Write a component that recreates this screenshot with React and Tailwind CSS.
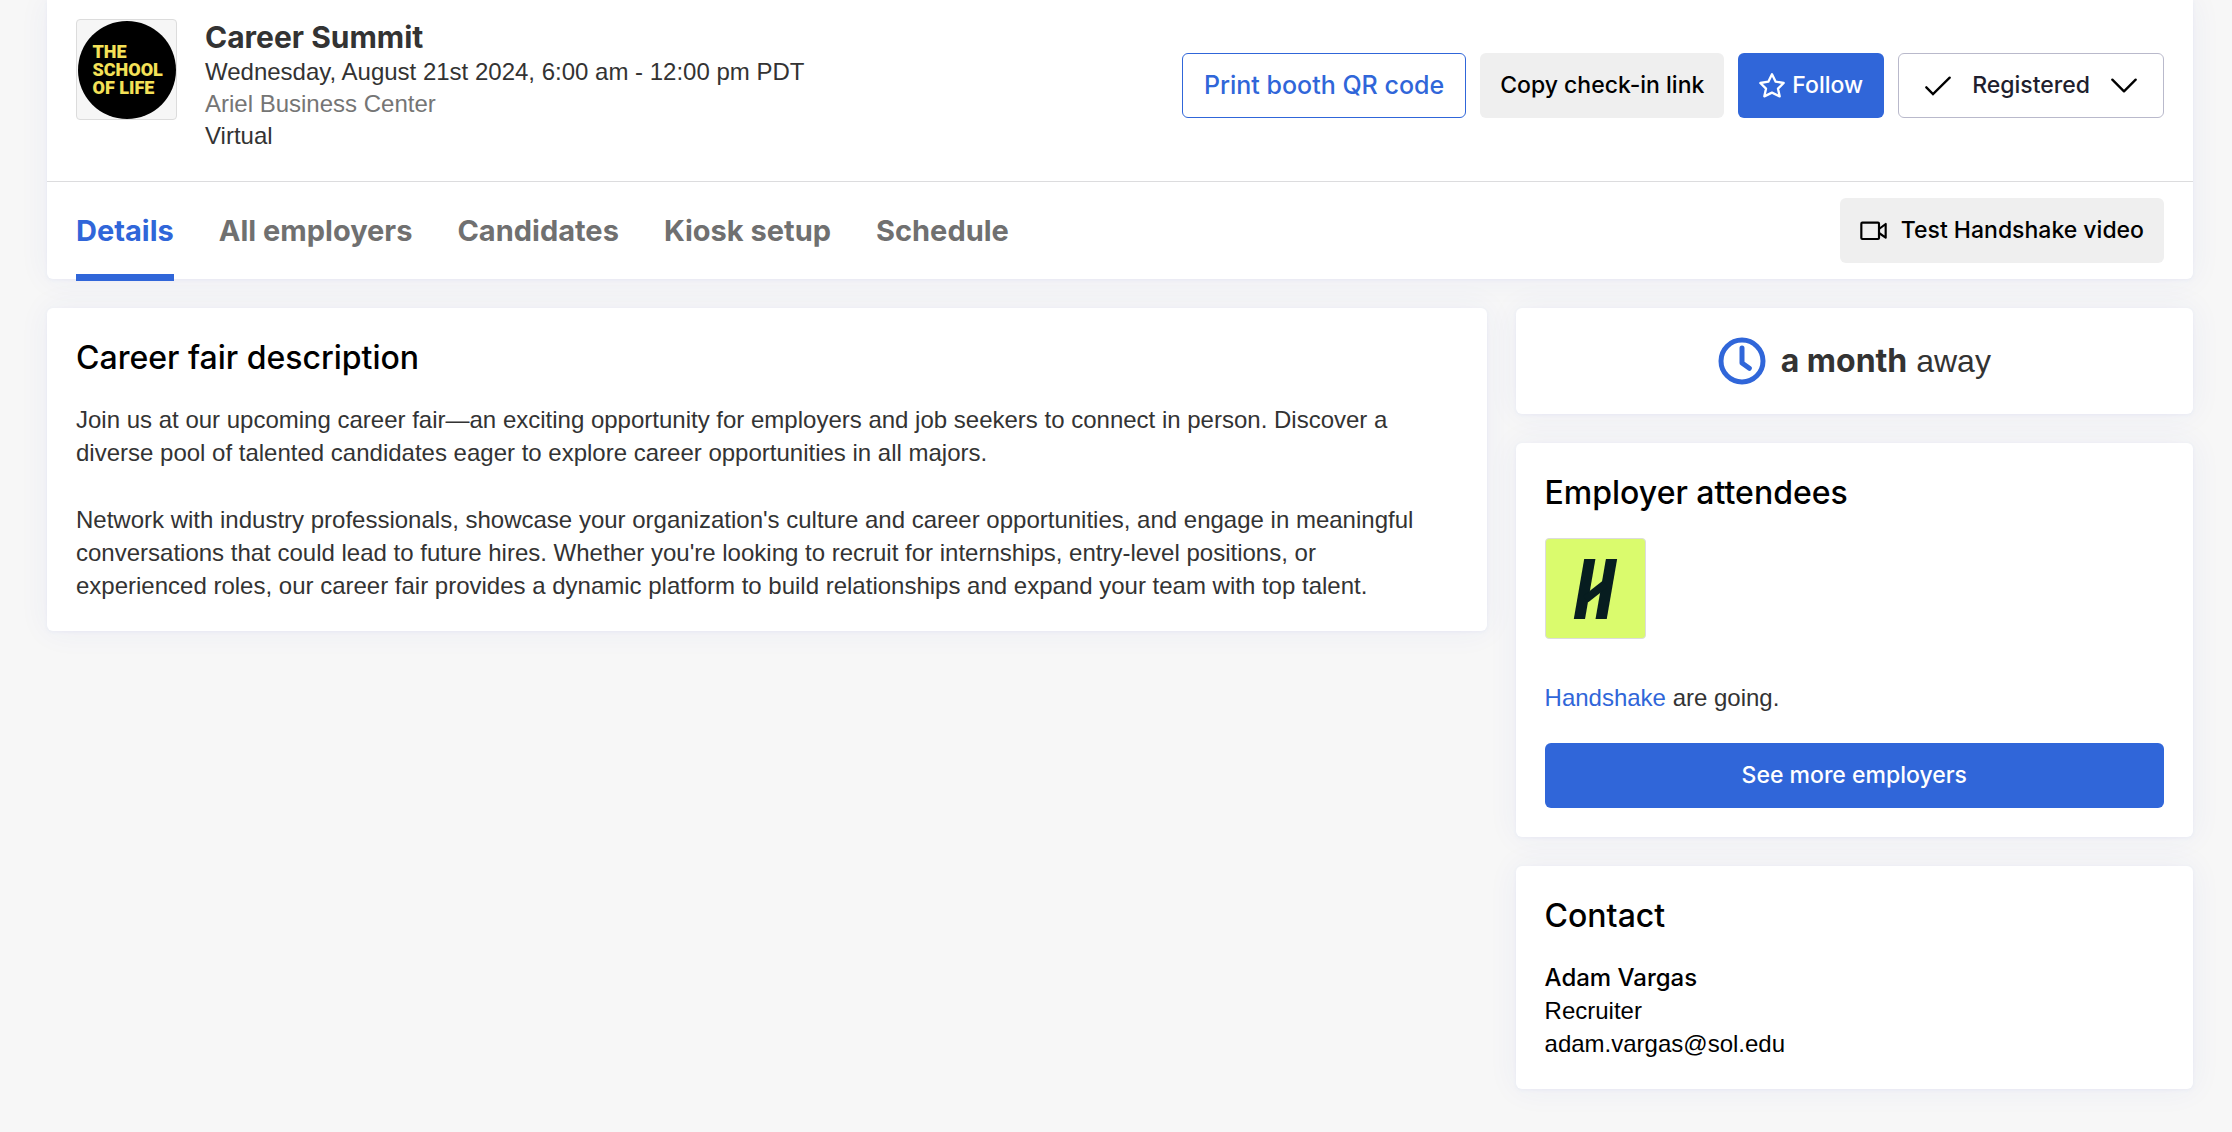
import { useState } from "react";
import { clsx } from "clsx";

const tabs = ["Details", "All employers", "Candidates", "Kiosk setup", "Schedule"];

const medium = "font-['Inter',sans-serif] font-medium";
const bold = "font-['Inter',sans-serif] font-bold";
const cardShadow = "shadow-[0_1px_4px_rgba(60,80,220,0.06),0_0_32px_rgba(50,70,180,0.06)]";

export default function App() {
  return (
    <div className="min-h-screen bg-[#f7f7f7] pl-[47px] pr-[39px] pb-10 font-['Liberation_Sans',Arial,sans-serif] text-2xl leading-[33px] text-[#333]">
      <FairHeader />

      <main className="mt-[29px] grid grid-cols-[17fr_8fr] items-start gap-[29px]">
        <Card title="Career fair description">
          <div className="pr-6">
            <p>
              Join us at our upcoming career fair—an exciting opportunity for employers and job seekers to
              connect in person. Discover a diverse pool of talented candidates eager to explore career
              opportunities in all majors.
            </p>
            <p className="mt-[34px]">
              Network with industry professionals, showcase your organization's culture and career
              opportunities, and engage in meaningful conversations that could lead to future hires. Whether
              you're looking to recruit for internships, entry-level positions, or experienced roles, our
              career fair provides a dynamic platform to build relationships and expand your team with top
              talent.
            </p>
          </div>
        </Card>

        <div className="flex flex-col gap-[29px]">
          <Card>
            <div className="flex items-center justify-center gap-[15px] text-[32px] leading-[48px]">
              <ClockIcon className="h-12 w-12 text-[#3066d9]" />
              <p>
                <strong className={bold}>a month</strong> away
              </p>
            </div>
          </Card>

          <Card title="Employer attendees">
            <HandshakeLogo />
            <p className="mt-[42px]">
              <a href="#handshake" className="text-[#3066d9]">Handshake</a> are going.
            </p>
            <Button variant="primary" className="mt-[29px] w-full">See more employers</Button>
          </Card>

          <Card title="Contact">
            <div className="text-black">
              <p className={medium}>Adam Vargas</p>
              <p>Recruiter</p>
              <p>adam.vargas@sol.edu</p>
            </div>
          </Card>
        </div>
      </main>
    </div>
  );
}

function FairHeader() {
  const [activeTab, setActiveTab] = useState("Details");

  return (
    <header className={clsx("rounded-b-md bg-white", cardShadow)}>
      <div className="flex items-center justify-between border-b border-[#dcdcde] px-[29px] pt-[19px] pb-[29px]">
        <div className="flex items-start gap-7">
          <SchoolLogo />
          <div className="leading-8">
            <h1 className={clsx(bold, "mb-[1px] text-3xl leading-9")}>Career Summit</h1>
            <p>Wednesday, August 21st 2024, 6:00 am - 12:00 pm PDT</p>
            <p className="text-[#757575]">Ariel Business Center</p>
            <p>Virtual</p>
          </div>
        </div>

        <div className="flex items-center gap-[14px]">
          <Button variant="outline">Print booth QR code</Button>
          <Button variant="muted">Copy check-in link</Button>
          <Button variant="primary" className="gap-[7px]">
            <StarIcon className="w-[26px]" />
            Follow
          </Button>
          <Button variant="select">
            <CheckIcon className="w-[26px] text-black" />
            Registered
            <ChevronIcon className="w-[26px] text-black" />
          </Button>
        </div>
      </div>

      <div className="flex items-center justify-between px-[29px]">
        <nav className="flex gap-[45px] self-stretch">
          {tabs.map((tab) => (
            <a
              key={tab}
              href={"#" + tab.toLowerCase().replace(" ", "-")}
              onClick={() => setActiveTab(tab)}
              className={clsx(
                bold,
                "relative flex items-center text-[29px]",
                tab === activeTab
                  ? "text-[#3066d9] after:absolute after:inset-x-0 after:-bottom-[2px] after:h-[7px] after:bg-[#3066d9]"
                  : "text-[#707070]"
              )}
            >
              {tab}
            </a>
          ))}
        </nav>
        <Button variant="muted" className="my-4 gap-[14px]">
          <VideoIcon className="w-[27px]" />
          Test Handshake video
        </Button>
      </div>
    </header>
  );
}

function Card({ title, children }) {
  return (
    <section className={clsx("rounded-md bg-white p-[29px]", cardShadow)}>
      {title && <h2 className={clsx(medium, "mb-6 text-[32px] leading-[42px] text-black")}>{title}</h2>}
      {children}
    </section>
  );
}

const variants = {
  primary: "bg-[#3066d9] px-[21px] text-[23px] text-white",
  outline: "border border-[#3066d9] px-[21px] text-[25px] text-[#3066d9]",
  muted: "bg-[#efefef] px-5 text-[23px] text-black",
  select: "gap-[21px] border border-[#b9b9cb] px-[26px] text-[23px] text-[#1f1f2e]",
};

function Button({ variant, className, children }) {
  return (
    <button
      type="button"
      className={clsx(
        medium,
        "flex h-[65px] cursor-pointer items-center justify-center rounded-md whitespace-nowrap",
        variants[variant],
        className
      )}
    >
      {children}
    </button>
  );
}

function SchoolLogo() {
  return (
    <div className="flex h-[101px] w-[101px] shrink-0 items-center justify-center rounded border border-[#dcdcdc] bg-[#f6f6f6]">
      <div className="flex h-[98px] w-[98px] flex-col justify-center rounded-full bg-black pl-[15px] font-['Roboto',sans-serif] text-lg leading-[18px] font-black whitespace-nowrap text-[#f4e157]">
        <span>THE</span>
        <span>SCHOOL</span>
        <span>OF LIFE</span>
      </div>
    </div>
  );
}

// Two slanted bars with a diagonal link between them
function HandshakeLogo() {
  return (
    <div className="flex h-[101px] w-[101px] items-center justify-center rounded border border-[#dcdcdc] bg-[#dafb6d]">
      <svg viewBox="100 80 134 179" className="h-[60px] w-[45px]" stroke="#071d20" fill="none">
        <line x1="155.2" y1="50" x2="114" y2="288" strokeWidth="33" />
        <line x1="220" y1="50" x2="178.8" y2="288" strokeWidth="33" />
        <line x1="138" y1="200" x2="196" y2="154" strokeWidth="24" />
      </svg>
    </div>
  );
}

const ClockIcon = ({ className }) => (
  <svg viewBox="0 0 144 144" fill="none" stroke="currentColor" strokeWidth="15" className={className} aria-hidden="true">
    <circle cx="72" cy="72" r="63" />
    <path d="M72 33v45l22 16" strokeLinejoin="round" strokeLinecap="round" />
  </svg>
);

const StarIcon = ({ className }) => (
  <svg viewBox="0 2 78 78" fill="none" stroke="currentColor" strokeWidth="7" strokeLinejoin="round" className={className} aria-hidden="true">
    <path d="M39 6l11 22 24 4-17 17 5 23-23-11-23 11 5-23L4 32l24-4z" />
  </svg>
);

const CheckIcon = ({ className }) => (
  <svg viewBox="0 0 78 60" fill="none" stroke="currentColor" strokeWidth="7" strokeLinecap="round" className={className} aria-hidden="true">
    <path d="M4 34l20 20L74 5" />
  </svg>
);

const ChevronIcon = ({ className }) => (
  <svg viewBox="0 0 78 46" fill="none" stroke="currentColor" strokeWidth="7" strokeLinecap="round" strokeLinejoin="round" className={className} aria-hidden="true">
    <path d="M4 5l35 35L74 5" />
  </svg>
);

const VideoIcon = ({ className }) => (
  <svg viewBox="0 0 81 60" fill="none" stroke="currentColor" strokeWidth="6.5" strokeLinejoin="round" className={className} aria-hidden="true">
    <rect x="4" y="5" width="53" height="49" rx="3" />
    <path d="M57 24l20-15v41L57 36" />
  </svg>
);
